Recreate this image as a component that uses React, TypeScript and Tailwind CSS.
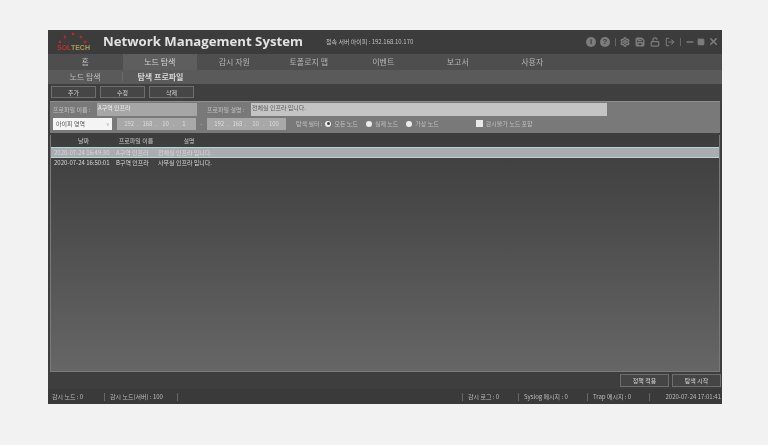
import { Settings, Save, LockOpen, LogOut, Minus, Square, X } from 'lucide-react';

export default function App() {
  return (
    <div className="w-[768px] h-[445px] overflow-hidden bg-[#f2f2f2] pt-[30px] pl-[48px] font-['Noto_Sans_CJK_KR','Noto_Sans',sans-serif]">
      <div className="w-[674px] h-[374px] flex flex-col bg-[#3e3e3e] text-[#d8d8d8] blur-[0.5px]">
        <TitleBar />
        <MainNav />
        <SubNav />

        {/* Toolbar */}
        <div className="h-[17px] flex items-center gap-[4px] pl-[3px] bg-[#3f3f3f]">
          <ToolButton label="추가" />
          <ToolButton label="수정" />
          <ToolButton label="삭제" />
        </div>

        <ProfileForm />

        {/* Results */}
        <div className="mx-[2px] mt-[2px] h-[238px] flex flex-col bg-gradient-to-b from-[#3d3d3d] to-[#666666] border-x border-b border-[#7a7a7a]">
          <div className="h-[12px] flex items-center text-[6px] text-[#c4c4c4]">
            <span className="w-[65px] text-center">날짜</span>
            <span className="w-[40px] text-center">프로파일 이름</span>
            <span className="w-[66px] text-center">설명</span>
          </div>
          <div className="h-[11px] flex items-center bg-[#a9acb0] border-y border-[#b5d6d6] text-[6px] text-[#d8d8d8]">
            <span className="w-[65px] pl-[3px] whitespace-nowrap">2020-07-24 16:49:30</span>
            <span className="w-[42px] whitespace-nowrap">A구역 인프라</span>
            <span className="whitespace-nowrap">전체실 인프라 입니다.</span>
          </div>
          <div className="h-[10px] flex items-center text-[6px] text-[#d8d8d8]">
            <span className="w-[65px] pl-[3px] whitespace-nowrap">2020-07-24 16:50:01</span>
            <span className="w-[42px] whitespace-nowrap">B구역 인프라</span>
            <span className="whitespace-nowrap">사무실 인프라 입니다.</span>
          </div>
        </div>

        {/* Bottom actions */}
        <div className="h-[17px] flex items-center justify-end gap-[3px] pr-[1px]">
          <ActionButton label="정책 적용" />
          <ActionButton label="탐색 시작" />
        </div>

        <StatusBar />
      </div>
    </div>
  );
}

function TitleBar() {
  return (
    <div className="h-[24px] flex items-center bg-[#3c3c3c]">
      <Logo />
      <h1 className="ml-[13px] w-[200px] text-[13.2px] font-bold text-[#e2e2e2] font-['Open_Sans',sans-serif] whitespace-nowrap">Network Management System</h1>
      <span className="ml-[23px] text-[6px] text-[#c0c0c0] whitespace-nowrap">접속 서버 아이피 : 192.168.10.170</span>
      <div className="ml-auto flex items-center pr-[3px] text-[#7c7c7c]">
        <FilledCircle mark="i" />
        <span className="w-[4px]" />
        <FilledCircle mark="?" />
        <span className="ml-[5px] mr-[4px] w-px h-[8px] bg-[#666666]" />
        <Settings className="w-[10px] h-[10px] mr-[5px]" strokeWidth={3.5} />
        <Save className="w-[10px] h-[10px] mr-[5px]" strokeWidth={3.5} />
        <LockOpen className="w-[10px] h-[10px] mr-[5px]" strokeWidth={3} />
        <LogOut className="w-[10px] h-[10px]" strokeWidth={2.5} />
        <span className="ml-[5px] mr-[4px] w-px h-[8px] bg-[#666666]" />
        <Minus className="w-[10px] h-[10px] mr-[2px]" strokeWidth={3.5} />
        <Square className="w-[8px] h-[8px] fill-current mr-[3px]" />
        <X className="w-[11px] h-[11px]" strokeWidth={3.5} />
      </div>
    </div>
  );
}

function FilledCircle({ mark }: { mark: string }) {
  return (
    <span className="w-[10px] h-[10px] rounded-full bg-[#7c7c7c] flex items-center justify-center text-[8px] leading-none font-bold text-[#3c3c3c] font-['Liberation_Sans',sans-serif]">
      {mark}
    </span>
  );
}

function Logo() {
  return (
    <div className="ml-[7px] w-[35px] h-[23px] relative shrink-0">
      <svg viewBox="0 0 35 14" className="w-[35px] h-[14px] mt-[1px] text-[#a8302c]">
        <circle cx="10" cy="6" r="1.4" fill="currentColor" />
        <circle cx="18" cy="3" r="1.4" fill="currentColor" />
        <circle cx="26" cy="6" r="1.4" fill="currentColor" />
        <circle cx="5" cy="11" r="1.4" fill="currentColor" />
        <circle cx="30" cy="11" r="1.4" fill="currentColor" />
      </svg>
      <span className="absolute left-[2px] bottom-[1px] text-[7px] leading-[8px] font-bold font-['Liberation_Sans',sans-serif] text-[#b9322c]">
        SOL<span className="text-[#a89a50]">TECH</span>
      </span>
    </div>
  );
}

function MainNav() {
  const items = ['홈', '노드 탐색', '감시 자원', '토폴로지 맵', '이벤트', '보고서', '사용자'];
  return (
    <div className="h-[16px] flex bg-[#4e4e4e] text-[8px] text-[#b4b4b4]">
      {items.map((item) => (
        <div key={item} className={item === '노드 탐색' ? 'w-[74.5px] flex items-center justify-center bg-[#5e5e5e] text-[#d4d4d4]' : 'w-[74.5px] flex items-center justify-center'}>
          {item}
        </div>
      ))}
    </div>
  );
}

function SubNav() {
  return (
    <div className="h-[14px] flex items-center bg-[#5a5a5a] text-[8px]">
      <span className="w-[74px] text-center text-[#bcbcbc]">노드 탐색</span>
      <span className="w-px h-[9px] bg-[#6a6a6a]" />
      <span className="w-[75px] text-center font-bold text-[#d6d6d6]">탐색 프로파일</span>
    </div>
  );
}

function ToolButton({ label }: { label: string }) {
  return (
    <button className="w-[45px] h-[12px] flex items-center justify-center border border-[#6e6e6e] bg-[#464646] text-[6px] text-[#d8d8d8]">
      {label}
    </button>
  );
}

function ActionButton({ label }: { label: string }) {
  return (
    <button className="w-[49px] h-[13px] flex items-center justify-center border border-[#6e6e6e] bg-[#454545] text-[6px] text-[#d8d8d8]">
      {label}
    </button>
  );
}

function ProfileForm() {
  return (
    <div className="mx-[2px] h-[32px] bg-[#797979] border-t border-[#8c8c8c] flex flex-col gap-[2px] pt-[1px] text-[6px] text-[#c0c0c0]">
      <div className="h-[13px] flex items-center">
        <span className="w-[47px] pl-[3px] whitespace-nowrap">프로파일 이름 :</span>
        <div className="w-[100px] h-[13px] bg-[#a6a6a6] text-[#ececec] px-[1px] leading-[10px]">A구역 인프라</div>
        <span className="w-[54px] pl-[10px] whitespace-nowrap">프로파일 설명 :</span>
        <div className="w-[356px] h-[13px] bg-[#c4c4c4] text-[#5a5a5a] px-[1px] leading-[10px]">전체실 인프라 입니다.</div>
      </div>
      <div className="h-[12px] flex items-center">
        <div className="ml-[3px] w-[59px] h-[12px] bg-[#f4f4f4] text-[#555555] flex items-center justify-between px-[3px]">
          <span>아이피 영역</span>
          <span className="text-[#aaaaaa] text-[5px]">v</span>
        </div>
        <IpBox parts={['192', '168', '10', '1']} className="ml-[5px]" />
        <span className="w-[11px] text-center">-</span>
        <IpBox parts={['192', '168', '10', '100']} />
        <span className="ml-[10px] whitespace-nowrap">탐색 필터 :</span>
        <Radio checked label="모든 노드" className="ml-[3px]" />
        <Radio label="실제 노드" className="ml-[8px]" />
        <Radio label="가상 노드" className="ml-[8px]" />
        <span className="ml-[37px] w-[7px] h-[7px] bg-[#e8e8e8]" />
        <span className="ml-[3px] whitespace-nowrap">감시불가 노드 포함</span>
      </div>
    </div>
  );
}

function IpBox({ parts, className = '' }: { parts: string[]; className?: string }) {
  return (
    <div className={`w-[79px] h-[12px] bg-[#a8a8a8] flex items-center justify-around px-[3px] text-[#dcdcdc] ${className}`}>
      {parts.map((part, i) => (
        <span key={i} className="flex-1 text-center relative">
          {part}
          {i < 3 && <span className="absolute right-0">.</span>}
        </span>
      ))}
    </div>
  );
}

function Radio({ label, checked, className = '' }: { label: string; checked?: boolean; className?: string }) {
  return (
    <div className={`flex items-center gap-[3px] whitespace-nowrap ${className}`}>
      <span className="w-[6px] h-[6px] rounded-full bg-[#ececec] flex items-center justify-center">
        {checked && <span className="w-[3px] h-[3px] rounded-full bg-[#444444]" />}
      </span>
      <span>{label}</span>
    </div>
  );
}

function StatusBar() {
  return (
    <div className="h-[15px] flex items-center bg-[#3a3a3a] text-[6px] text-[#bcbcbc] whitespace-nowrap">
      <span className="w-[56px] pl-[4px]">감시 노드 : 0</span>
      <span className="w-px h-[8px] bg-[#666666]" />
      <span className="w-[72px] pl-[5px]">감시 노드(서버) : 100</span>
      <span className="w-px h-[8px] bg-[#666666]" />
      <span className="w-[284px]" />
      <span className="w-px h-[8px] bg-[#666666]" />
      <span className="w-[55px] pl-[5px]">감시 로그 : 0</span>
      <span className="w-px h-[8px] bg-[#666666]" />
      <span className="w-[68px] pl-[5px]">Syslog 메시지 : 0</span>
      <span className="w-px h-[8px] bg-[#666666]" />
      <span className="w-[61px] pl-[5px]">Trap 메시지 : 0</span>
      <span className="w-px h-[8px] bg-[#666666]" />
      <span className="flex-1 text-right pr-[1px]">2020-07-24 17:01:41</span>
    </div>
  );
}
